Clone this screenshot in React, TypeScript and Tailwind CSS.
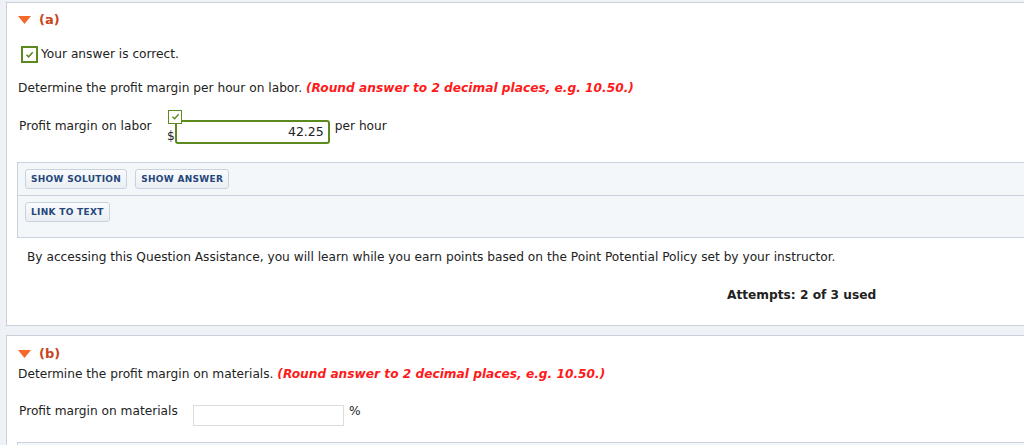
import React from 'react';

function Caret() {
  return (
    <svg width="13" height="8" viewBox="0 0 13 8" className="shrink-0">
      <path d="M0 0 H13 L6.5 8 Z" fill="#f4682c" />
    </svg>
  );
}

function CheckBox({ size = 16, thin = false }: { size?: number; thin?: boolean }) {
  const inner = thin ? size - 3 : size - 6;
  return (
    <span
      className={`inline-flex items-center justify-center border-[#5c8a1e] bg-white ${thin ? 'border-[1.5px]' : 'border-2'}`}
      style={{ width: size, height: size }}
    >
      <svg width={inner} height={inner} viewBox="0 0 10 10">
        <path d="M2.2 5.2 L4.2 7.1 L7.9 3" fill="none" stroke="#5c8a1e" strokeWidth={thin ? 1.2 : 1.4} />
      </svg>
    </span>
  );
}

function AssistButton({ label }: { label: string }) {
  return (
    <button className="h-[20px] px-[5px] rounded-[3px] border border-[#c9d3de] bg-gradient-to-b from-[#f9fbfd] to-[#eaeff5] text-[9px] font-bold tracking-[0.3px] text-[#26477a]">
      {label}
    </button>
  );
}

export default function App() {
  return (
    <div className="min-h-[445px] bg-[#eef2f7] pl-[6px] pt-[2px] font-['DejaVu_Sans',Verdana,sans-serif] text-[12.2px] leading-[18px] text-[#222]">
      {/* Part (a) */}
      <div className="bg-white border-l border-t border-b border-[#c7d0db] h-[324px] pl-[10px]">
        <div className="flex items-center gap-[8px] h-[32px] pt-[2px] pl-[1px]">
          <Caret />
          <span className="font-bold text-[13px] text-[#c9451c]">(a)</span>
        </div>

        <div className="flex items-center gap-[3px] mt-[10px] ml-[4px]">
          <CheckBox size={17} />
          <span>Your answer is correct.</span>
        </div>

        <div className="mt-[16px] pl-[1px]">
          Determine the profit margin per hour on labor.{' '}
          <span className="font-bold italic text-[#ff1a1a]">(Round answer to 2 decimal places, e.g. 10.50.)</span>
        </div>

        <div className="flex items-center mt-[15px] ml-[2px] h-[32px]">
          <span className="w-[148px] -mt-[4px]">Profit margin on labor</span>
          <div className="relative flex items-end h-[32px]">
            <span className="absolute left-[1px] top-[-3px]">
              <CheckBox size={14} thin />
            </span>
            <span className="leading-none mb-[2px]">$</span>
            <div className="w-[155px] h-[24px] border-2 border-[#5c8a1e] rounded-[3px] flex items-center justify-end pr-[4px] text-[12.5px]">
              42.25
            </div>
          </div>
          <span className="ml-[5px] -mt-[4px]">per hour</span>
        </div>

        <div className="mt-[18px] border-l border-t border-b border-[#c9d2dc] bg-[#f4f7fa]">
          <div className="flex items-center gap-[8px] h-[33px] pl-[7px] border-b border-[#c9d2dc]">
            <AssistButton label="SHOW SOLUTION" />
            <AssistButton label="SHOW ANSWER" />
          </div>
          <div className="flex h-[41px] pl-[7px] pt-[6px]">
            <AssistButton label="LINK TO TEXT" />
          </div>
        </div>

        <div className="mt-[10px] pl-[10px]">
          By accessing this Question Assistance, you will learn while you earn points based on the Point Potential Policy set by your instructor.
        </div>

        <div className="mt-[20px] pl-[710px] font-bold">Attempts: 2 of 3 used</div>
      </div>

      {/* Part (b) */}
      <div className="mt-[9px] bg-white border-l border-t border-[#c7d0db] pl-[10px] pt-[9px] h-[110px]">
        <div className="flex items-center gap-[8px] h-[18px] pl-[1px]">
          <Caret />
          <span className="font-bold text-[13px] text-[#c9451c]">(b)</span>
        </div>
        <div className="mt-[2px] pl-[1px]">
          Determine the profit margin on materials.{' '}
          <span className="font-bold italic text-[#ff1a1a]">(Round answer to 2 decimal places, e.g. 10.50.)</span>
        </div>
        <div className="flex items-start mt-[22px] ml-[2px]">
          <span className="w-[174px] -mt-[3px]">Profit margin on materials</span>
          <div className="w-[151px] h-[21px] border border-[#dcdcdc] bg-white"></div>
          <span className="ml-[5px] -mt-[3px]">%</span>
        </div>
        <div className="mt-[16px] h-[10px] border-l border-t border-[#c9d2dc] bg-[#f4f7fa]"></div>
      </div>
    </div>
  );
}
